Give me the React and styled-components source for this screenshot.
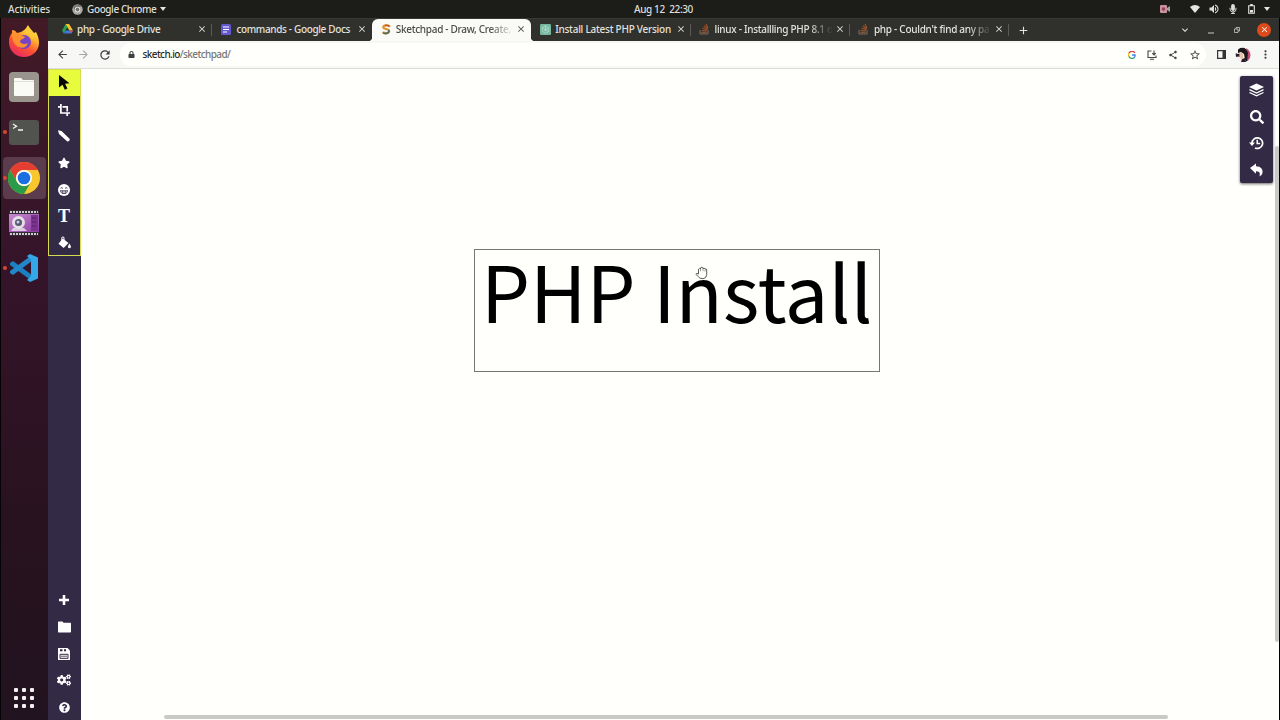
import React from "react";
import styled, { createGlobalStyle } from "styled-components";
import {
  FaStar, FaCogs, FaQuestionCircle, FaSearch, FaLock, FaMicrophone,
} from "react-icons/fa";
import {
  MdArrowBack, MdArrowForward, MdRefresh, MdShare, MdStarBorder,
  MdMoreVert, MdClose, MdAdd, MdVolumeUp, MdExpandMore,
} from "react-icons/md";

const GlobalStyle = createGlobalStyle`
* {
  box-sizing: border-box;
}

body {
  margin: 0;
  overflow: hidden;
  background: #000;
  font-family: "Noto Sans", "Open Sans", sans-serif;
}

svg {
  display: block;
  flex: none;
}
`;

const Desktop = styled.div`
  display: flex;
  flex-direction: column;
  width: 1280px;
  height: 720px;
`;

/* 상단 패널 */
const TopPanel = styled.header`
  display: grid;
  grid-template-columns: 634px 60px 1fr;
  align-items: center;
  height: 18px;
  background: #1c1c18;
  color: #dededa;
`;

const PanelLeft = styled.div`
  display: flex;
  align-items: center;
  padding-left: 8px;
`;

const PanelRight = styled.div`
  display: flex;
  align-items: center;
  justify-content: flex-end;
  padding-right: 10px;
`;

const Label = styled.span`
  font-size: 10px;
  font-weight: 500;
  line-height: 14px;
  letter-spacing: ${p => p.$track || 0}px;
  white-space: pre;
`;

const AppMenu = styled.div`
  display: flex;
  align-items: center;
  gap: 4px;
  margin-left: 22px;
`;

const Gap = styled.span`
  flex: none;
  width: ${p => p.$w}px;
`;

const Body = styled.div`
  display: flex;
  flex: 1;
  min-height: 0;
`;

/* 독 */
const Dock = styled.nav`
  display: flex;
  flex-direction: column;
  align-items: center;
  width: 48px;
  padding-bottom: 12px;
  box-shadow: inset 1px 0 0 #050305;
  background: linear-gradient(#421a26 0, #35142a 35%, #29121f 70%, #21131f 100%);
`;

const DockItem = styled.div`
  display: flex;
  align-items: center;
  justify-content: center;
  position: relative;
  width: 43px;
  height: ${p => p.$h}px;
  margin-top: ${p => (p.$active ? 3 : 0)}px;
  border-radius: 4px;
  background: ${p => (p.$active ? "#5b3c4d" : "transparent")};

  &::before {
    content: "";
    display: ${p => (p.$running ? "block" : "none")};
    position: absolute;
    left: 0;
    width: 4px;
    height: 4px;
    border-radius: 50%;
    background: #d34a30;
  }
`;

const AppsButton = styled.div`
  display: grid;
  grid-template-columns: repeat(3, 4px);
  gap: 4px;
  margin-top: auto;

  > i {
    height: 4px;
    border-radius: 1px;
    background: #f2f0f1;
  }
`;

/* 브라우저 */
const Browser = styled.div`
  display: flex;
  flex-direction: column;
  flex: 1;
  min-width: 0;
  margin-right: 1px;
`;

const TabStrip = styled.div`
  display: flex;
  align-items: center;
  height: 23px;
  padding-left: 5px;
  background: #30302c;
  border-top: 1px solid #383834;
  color: #e2e2de;
`;

const Tab = styled.div`
  display: flex;
  align-items: center;
  position: relative;
  width: 159.400px;
  height: 22px;
  padding: 0 5px 2px 8px;
  border-radius: 6px 6px 0 0;
  background: ${p => (p.$active ? "#fafaf7" : "transparent")};
  color: ${p => (p.$active ? "#4b4b48" : "#e2e2de")};

  &::before {
    content: "";
    display: ${p => (p.$active ? "block" : "none")};
    position: absolute;
    left: -4px;
    right: -4px;
    bottom: 0;
    height: 4px;
    background:
      radial-gradient(circle at 0 0, transparent 4px, #fafaf7 4.500px) left / 4px 4px no-repeat,
      radial-gradient(circle at 100% 0, transparent 4px, #fafaf7 4.500px) right / 4px 4px no-repeat;
  }

  &::after {
    content: "";
    position: absolute;
    right: 0;
    top: 5px;
    width: 1px;
    height: 12px;
    background: ${p => (p.$line ? "#5b5b57" : "transparent")};
  }
`;

const Favicon = styled.span`
  display: flex;
  justify-content: center;
  width: 12px;
`;

const TabTitle = styled.div`
  flex: 1;
  min-width: 0;
  margin-left: 4px;
  font-size: 10px;
  font-weight: 500;
  line-height: 14px;
  letter-spacing: ${p => p.$track || 0}px;
  white-space: nowrap;
  mask-image: ${p => (p.$fade ? "linear-gradient(90deg, #000 78%, transparent 98%)" : "none")};
`;

const WindowButtons = styled.div`
  display: flex;
  align-items: center;
  margin-left: auto;
  padding-right: 8px;
  padding-bottom: 1px;
`;

const CloseWindow = styled.span`
  display: flex;
  align-items: center;
  justify-content: center;
  width: 14px;
  height: 14px;
  border-radius: 50%;
  background: #dd4a1c;
  color: #fff;
`;

const AddressBar = styled.div`
  display: flex;
  align-items: center;
  height: 28px;
  padding: 0 7px 0 8px;
  background: #f7f7f5;
  border-bottom: 1px solid #dcdcda;
  color: #40403e;
`;

const Omnibox = styled.div`
  display: flex;
  align-items: center;
  width: 1088px;
  height: 23px;
  margin-left: 8px;
  padding: 0 5px 0 8px;
  border-radius: 12px;
  background: #fffffc;

  > svg + svg {
    margin-left: 11px;
  }
`;

const Url = styled.span`
  flex: 1;
  margin-left: 7.500px;
  font-size: 10px;
  font-weight: 500;
  line-height: 14px;
  letter-spacing: -0.600px;
  padding-bottom: 1px;
  color: #777775;

  > b {
    font-weight: 500;
    color: #292927;
  }
`;

/* 스케치패드 */
const Page = styled.main`
  display: flex;
  flex: 1;
  min-height: 0;
  background: #fffffc;
`;

const Side = styled.aside`
  display: flex;
  flex-direction: column;
  justify-content: space-between;
  width: 33px;
  background: #332b46;
  color: #fff;
`;

const ToolGroup = styled.div`
  display: flex;
  flex-direction: column;
  outline: ${p => (p.$outlined ? "1px solid #d6dc50" : "0")};
  outline-offset: -1px;
`;

const Tool = styled.div`
  display: flex;
  align-items: center;
  justify-content: center;
  height: 26.700px;
  padding: 1px ${p => (p.$wide ? 0 : 1)}px 0 0;
  background: ${p => (p.$active ? "#e7fc3c" : "transparent")};
  color: ${p => (p.$active ? "#111" : "#fff")};
  font: bold 18px/20px "Liberation Serif", serif;
`;

const Canvas = styled.section`
  position: relative;
  flex: 1;
`;

const TextBox = styled.div`
  position: absolute;
  left: 393px;
  top: 180px;
  width: 406px;
  height: 123px;
  padding-left: 6px;
  border: 1px solid #767674;
  color: #000;
  font-family: "Noto Sans CJK SC", "Noto Sans CJK JP", sans-serif;
  font-size: 77.500px;
  line-height: 79px;
  white-space: nowrap;
`;

const Cursor = styled.div`
  position: absolute;
  left: 614px;
  top: 197px;
`;

const FloatPanel = styled.div`
  position: absolute;
  right: 6px;
  top: 7px;
  width: 33px;
  height: 107px;
  border-radius: 2px;
  background: #332b46;
  color: #fff;
  box-shadow: 0 1px 3px rgba(0, 0, 0, 0.6);
`;

const ScrollV = styled.div`
  position: absolute;
  right: 0;
  top: 77px;
  width: 4px;
  height: 496px;
  border-radius: 2px;
  background: #c9c9c7;
`;

const ScrollH = styled.div`
  position: absolute;
  left: 83px;
  bottom: 1px;
  width: 1004px;
  height: 4px;
  border-radius: 2px;
  background: #c9c9c7;
`;

const FirefoxIcon = () => (
  <svg width="32" height="34" viewBox="0 0 32 34">
    <defs>
      <linearGradient id="ffx" x1="0.8" y1="0" x2="0.25" y2="1">
        <stop offset="0" stopColor="#fff24a" />
        <stop offset="0.35" stopColor="#ffb02e" />
        <stop offset="0.65" stopColor="#ff5035" />
        <stop offset="1" stopColor="#e32766" />
      </linearGradient>
    </defs>
    <path d="M20 1c1 3 4 5 6 8l2-1c2 4 3 7 3 11 0 8-7 14-15 14S1 27 1 18c0-4 1-7 3-9V6c2 0 4 1 5 3l4-1c2-1 5-3 7-7z" fill="url(#ffx)" />
    <circle cx="16" cy="18" r="7" fill="#7644c4" />
    <path d="M4 9c3 0 6 0 9 2l4 2c-1 2-4 2-5 4 0 3 5 4 8 2-1 4-5 6-9 4-4-1-7-6-7-14z" fill="#ff9030" />
    <path d="M16 10c4-2 8 2 8 6 3-3 1-8-2-11l-3-2c0 3-1 5-3 7z" fill="#ffc938" />
  </svg>
);

const FilesIcon = () => (
  <svg width="30" height="30" viewBox="0 0 30 30">
    <rect width="30" height="30" rx="4" fill="#99958c" />
    <path d="M5 7q0-1 1-1h6l2 2h10q1 0 1 1v14q0 1-1 1H6q-1 0-1-1z" fill="#fbfbf6" />
    <path d="M5 9.5h20" stroke="#dbd9d2" strokeWidth="0.8" />
  </svg>
);

const TerminalIcon = () => (
  <svg width="30" height="25" viewBox="0 0 30 25">
    <rect width="30" height="25" rx="3" fill="#51534f" />
    <path d="M4 4l3.500 2.200L4 8.500M9 10h5" fill="none" stroke="#f4f4f2" strokeWidth="1.300" />
  </svg>
);

const ChromeIcon = () => (
  <svg width="32" height="32" viewBox="0 0 32 32">
    <circle cx="16" cy="16" r="16" fill="#f7c72d" />
    <path d="M2.100 8A16 16 0 0 1 29.900 8H16a8 8 0 0 0-7 12z" fill="#e43e32" />
    <path d="M2.100 8A16 16 0 0 0 16 32l7-12a8 8 0 0 1-14 0z" fill="#299b49" />
    <circle cx="16" cy="16" r="8" fill="#fff" />
    <circle cx="16" cy="16" r="6.300" fill="#1b6fe0" />
  </svg>
);

const RecorderIcon = () => (
  <svg width="30" height="26" viewBox="0 0 30 26">
    <defs>
      <linearGradient id="rec" x1="0" y1="0" x2="1" y2="1">
        <stop offset="0" stopColor="#c98bd0" />
        <stop offset="1" stopColor="#8b3aa2" />
      </linearGradient>
    </defs>
    <rect width="30" height="26" rx="1" fill="#332a35" />
    <rect y="4" width="30" height="18" fill="url(#rec)" />
    <rect x="22" y="5" width="7" height="16" fill="#7b348e" />
    <path d="M1 2h28M1 24h28" stroke="#d6cdd8" strokeWidth="2" strokeDasharray="2 1" />
    <path d="M23 8h5M23 12h5M23 16h5" stroke="#4f1b5d" strokeDasharray="1.500 1" />
    <path d="M4 18h11l3 3H2z" fill="#d9cedd" />
    <circle cx="9.500" cy="12.500" r="6.500" fill="#e4dfe8" />
    <circle cx="9.500" cy="12.500" r="3.500" fill="#5a596d" />
    <circle cx="9" cy="12" r="1.500" fill="#c1d2ed" />
  </svg>
);

const CodeIcon = () => (
  <svg width="30" height="28" viewBox="0 0 30 28">
    <path d="M1 9l3-2 19 14v6L1 11z" fill="#1b80bf" />
    <path d="M1 19l3 2L23 7V1L1 17z" fill="#2386c8" />
    <path d="M21 0l8 3.500v21L21 28l-3-2 4-4V6l-4-4z" fill="#35a6e8" />
  </svg>
);

const DriveIcon = () => (
  <svg width="11" height="10" viewBox="0 0 11 10">
    <path d="M3.700 0h3.400L3.400 6.600 1.800 9.500 0 6.500z" fill="#26a252" />
    <path d="M3.700 0h3.400L11 6.500H7.400z" fill="#f5c02d" />
    <path d="M3.500 6.500H11L9.300 9.500H1.800z" fill="#3c78df" />
    <path d="M7.400 6.500H11L9.300 9.500z" fill="#d95143" />
  </svg>
);

const DocsIcon = () => (
  <svg width="10" height="11" viewBox="0 0 10 11">
    <rect width="10" height="11" rx="1.500" fill="#6559cf" />
    <path d="M2 3h6M2 5.500h6M2 8h4" stroke="#fff" strokeWidth="1.200" />
  </svg>
);

const SketchpadIcon = () => (
  <svg width="10" height="11" viewBox="0 0 10 11">
    <path d="M8.500 3C8 .9 2.500.8 2.300 3.200c0 2.200 5.800 1.400 5.800 4 0 2.200-5 2.600-6.300.6" fill="none" stroke="#dd9430" strokeWidth="2.200" />
    <path d="M7.500 6c1.500 2.500-2 4.500-5.500 3" fill="none" stroke="#526b62" strokeWidth="1.700" />
    <path d="M4 1.400c2-.5 3.700 0 4.400 1.300" fill="none" stroke="#c2522f" strokeWidth="1.300" />
  </svg>
);

const GptIcon = () => (
  <svg width="11" height="11" viewBox="0 0 11 11">
    <rect width="11" height="11" rx="1.200" fill="#75b99f" />
    <path d="M5.500 1.800l3.200 1.900v3.700L5.500 9.300 2.300 7.400V3.700zM2.300 3.700l6.400 3.700M5.500 1.800v5.500M8.700 3.700L4 6.500" fill="none" stroke="#c6e4d8" strokeWidth="0.600" />
  </svg>
);

const StackIcon = () => (
  <svg width="11" height="12" viewBox="0 0 11 12">
    <path d="M1 7v4h8V7" fill="none" stroke="#77716a" strokeWidth="1" />
    <path d="M2.500 9.300h5M2.700 7.300l5 .7M3.500 5l4.500 2M5 2.800l3.600 3.400M7 1l2 4.500" stroke="#9c5028" strokeWidth="1.200" />
  </svg>
);

const GoogleG = () => (
  <svg width="8" height="8" viewBox="0 0 18 18">
    <path d="M15.500 4A8 8 0 0 0 2 5" fill="none" stroke="#e34133" strokeWidth="3" />
    <path d="M2.300 5a8 8 0 0 0 0 8" fill="none" stroke="#efb91f" strokeWidth="3" />
    <path d="M2 12.500a8 8 0 0 0 12 2.500" fill="none" stroke="#35a354" strokeWidth="3" />
    <path d="M9 9h7a7 7 0 0 1-2.500 6" fill="none" stroke="#4285e8" strokeWidth="3" />
  </svg>
);

const InstallIcon = () => (
  <svg width="10" height="10" viewBox="0 0 10 10" fill="none" stroke="#454543" strokeWidth="1.100">
    <path d="M4.500 1H1v6.500h8V5.500M3 9.300h4M7 .5v4.300M5.300 3.200L7 5l1.700-1.800" />
  </svg>
);

const Avatar = () => (
  <svg width="16" height="16" viewBox="0 0 16 16">
    <defs>
      <clipPath id="face"><circle cx="8" cy="8" r="7.500" /></clipPath>
    </defs>
    <g clipPath="url(#face)">
      <rect width="16" height="16" fill="#f6efec" />
      <path d="M11 0h5v14h-4z" fill="#c24c71" />
      <path d="M3 2c4-3 9-1 10 4l-1 9-2-2-1-6-3-2-3 1z" fill="#1c171b" />
      <path d="M5 5l3 2v4l-2.500 1z" fill="#e9bb9f" />
      <path d="M0 6l3 1 1.500-.5V10L3 9.500 1 10zM7 12l3-1 1 4H6z" fill="#28202a" />
    </g>
  </svg>
);

const PointerIcon = () => (
  <svg width="12" height="15" viewBox="0 0 12 15">
    <path d="M1 0l10.500 8.200-4.400.5 2.300 4.800-2.600 1.200-2.300-5L1 12.500z" fill="#080808" />
  </svg>
);

const CropIcon = () => (
  <svg width="12" height="12" viewBox="0 0 12 12" fill="none" stroke="#fff" strokeWidth="1.700">
    <path d="M2.900 0v9H12M0 2.900h2.500M4.500 2.900h4.700v4.600M9.200 9.500V12" />
  </svg>
);

const BrushIcon = () => (
  <svg width="12" height="12" viewBox="0 0 12 12">
    <path d="M0 .3l3.500.6 8 7.900q.8 2.700-2.200 2.600L1 3.900z" fill="#fff" />
  </svg>
);

const SmileyIcon = () => (
  <svg width="12" height="12" viewBox="0 0 12 12">
    <circle cx="6" cy="6" r="6" fill="#fff" />
    <path d="M2.500 4.300q1.200-1.200 2.400 0M7 4.300q1.200-1.200 2.400 0" fill="none" stroke="#332b46" strokeWidth="0.900" />
    <path d="M1.800 6.300h8.400Q9.500 10 6 10T1.800 6.300z" fill="#332b46" />
    <path d="M2.700 7.200h6.600M3.500 8.600h5" stroke="#fff" strokeWidth="0.800" />
    <path d="M4.500 6.500v3M7.500 6.500v3" stroke="#332b46" strokeWidth="0.500" />
  </svg>
);

const BucketIcon = () => (
  <svg width="13" height="13" viewBox="0 0 13 13">
    <path d="M4.700 2.500L10.500 7l-4.800 5-5.200-4.300z" fill="#fff" />
    <path d="M3.800 5V1.500Q5 .3 6 1.500V5" fill="none" stroke="#fff" strokeWidth="1" />
    <path d="M11.400 7.500q3 4.600 0 4.700t0-4.700z" fill="#fff" />
  </svg>
);

const PlusIcon = () => (
  <svg width="10" height="10" viewBox="0 0 10 10">
    <path d="M5 0v10M0 5h10" stroke="#fff" strokeWidth="2.600" />
  </svg>
);

const FolderIcon = () => (
  <svg width="13" height="12" viewBox="0 0 13 12">
    <path d="M0 1.200Q0 .5.700.5h3.800l1 1.200h6.800q.7 0 .7.700v8.400q0 .7-.7.700H.7q-.7 0-.7-.7z" fill="#fff" />
  </svg>
);

const FloppyIcon = () => (
  <svg width="12" height="12" viewBox="0 0 12 12">
    <path d="M0 0h9.500L12 2.500V12H0z" fill="#fff" />
    <path d="M2 1.300h2.500v2H2zM6 1.300h2v2H6z" fill="#332b46" />
    <path d="M2 6.300h8v4H2z" fill="#fff" stroke="#332b46" strokeWidth="1" />
    <path d="M3 8.300h6" stroke="#8f8998" strokeWidth="1.500" />
  </svg>
);

const LayersIcon = () => (
  <svg width="15" height="14" viewBox="0 0 15 14">
    <path d="M7.500.5L15 4 7.500 7.500 0 4z" fill="#fff" />
    <path d="M.5 6.700l7 3.300 7-3.300M.5 9.500l7 3.300 7-3.300" fill="none" stroke="#fff" strokeWidth="1.300" />
  </svg>
);

const HistoryIcon = () => (
  <svg width="15" height="14" viewBox="0 0 15 14">
    <path d="M3 7a5.300 5.300 0 1 1 3 4.900" fill="none" stroke="#fff" strokeWidth="1.700" />
    <path d="M0 6.500h6L3 10z" fill="#fff" />
    <path d="M8.200 3.800v3.700h3" fill="none" stroke="#fff" strokeWidth="1.500" />
  </svg>
);

const UndoIcon = () => (
  <svg width="13" height="14" viewBox="0 0 13 14">
    <path d="M0 5L6 .5v2.700c5 0 7 3 6.500 6.500-.3 1.700-1.500 3-3.300 3.800 1.300-2.500.8-5.500-3.200-5.300v2.600z" fill="#fff" />
  </svg>
);

const HandIcon = () => (
  <svg width="13" height="14" viewBox="0 0 13 14">
    <path d="M3.500 7V3.200q1-1.500 1.900-.2Q5.500 1 7 1.200q1 0 1 1.500 1.300-1.300 2 .3 1.600-.6 1.700 1v4.500Q11.500 12.500 8 12.700q-3.500.2-4.700-2.200L.8 8.300Q1.500 6.500 3.500 8z" fill="#fffffc" stroke="#4a4a48" strokeWidth="0.900" />
    <path d="M5.500 3v2.300M8 2.700v2.500M10 3.500v2" stroke="#777" strokeWidth="0.700" />
  </svg>
);

const CaretIcon = () => (
  <svg width="6" height="4" viewBox="0 0 6 4">
    <path d="M0 0h6L3 4z" fill="#e5e5e2" />
  </svg>
);

const tabs = [
  { title: "php - Google Drive", icon: DriveIcon, line: true, track: -0.32 },
  { title: "commands - Google Docs", icon: DocsIcon, track: -0.35 },
  { title: "Sketchpad - Draw, Create,", icon: SketchpadIcon, active: true, fade: true, track: -0.3 },
  { title: "Install Latest PHP Version", icon: GptIcon, line: true, track: -0.25 },
  { title: "linux - Installling PHP 8.1 o", icon: StackIcon, line: true, fade: true, track: -0.3 },
  { title: "php - Couldn't find any pa", icon: StackIcon, line: true, fade: true, track: -0.28 },
];

const App = () => {
  return (
    <>
      <GlobalStyle />
      <Desktop>
        <TopPanel>
          <PanelLeft>
            <Label $track={-0.1}>Activities</Label>
            <AppMenu>
              <svg width="11" height="11" viewBox="0 0 11 11">
                <circle cx="5.500" cy="5.500" r="5.200" fill="#aaa9a7" />
                <path d="M1 3Q6-2 10 3H5.500L3 7z" fill="#777674" />
                <circle cx="5.500" cy="5.500" r="2.700" fill="#eee" />
                <circle cx="5.500" cy="5.500" r="1.900" fill="#747371" />
              </svg>
              <Label $track={-0.42}>Google Chrome</Label>
              <CaretIcon />
            </AppMenu>
          </PanelLeft>
          <Label $track={-0.38}>Aug 12  22:30</Label>
          <PanelRight>
            <svg width="10" height="8" viewBox="0 0 10 8">
              <rect width="7" height="8" rx="1" fill="#c9929f" />
              <path d="M7 3l3-2v6L7 5z" fill="#a99ca0" />
              <circle cx="3.500" cy="4" r="1.800" fill="#934257" />
            </svg>
            <Gap $w={20} />
            <svg width="10" height="8" viewBox="0 0 10 8"><path d="M0 2Q5-2 10 2L5 8z" fill="#e5e5e2" /></svg>
            <Gap $w={8} />
            <MdVolumeUp size={12} />
            <Gap $w={8} />
            <FaMicrophone size={10} />
            <Gap $w={10} />
            <svg width="7" height="10" viewBox="0 0 7 10">
              <path d="M.7 1.700h5.600v7.600H.7zM2.200.6h2.600" fill="none" stroke="#e5e5e2" strokeWidth="1.100" />
              <path d="M2 6h3v2.500H2z" fill="#e5e5e2" />
            </svg>
            <Gap $w={9} />
            <CaretIcon />
          </PanelRight>
        </TopPanel>

        <Body>
          <Dock>
            <DockItem $h={46}><FirefoxIcon /></DockItem>
            <DockItem $h={46}><FilesIcon /></DockItem>
            <DockItem $h={44} $running><TerminalIcon /></DockItem>
            <DockItem $h={42} $active $running><ChromeIcon /></DockItem>
            <DockItem $h={47}><RecorderIcon /></DockItem>
            <DockItem $h={44} $running><CodeIcon /></DockItem>
            <AppsButton>
              {Array.from({ length: 9 }, (_, i) => <i key={i} />)}
            </AppsButton>
          </Dock>

          <Browser>
            <TabStrip>
              {tabs.map(({ title, icon: Icon, active, line, fade, track }) => (
                <Tab key={title} $active={active} $line={line}>
                  <Favicon><Icon /></Favicon>
                  <TabTitle $fade={fade} $track={track}>{title}</TabTitle>
                  <MdClose size={10} />
                </Tab>
              ))}
              <Gap $w={8} />
              <MdAdd size={13} />
              <WindowButtons>
                <MdExpandMore size={12} />
                <Gap $w={17} />
                <svg width="6" height="8" viewBox="0 0 6 8"><path d="M0 7h6" stroke="#c9c9c5" /></svg>
                <Gap $w={20} />
                <svg width="6" height="6" viewBox="0 0 6 6"><path d="M.5 2h3.500v3.500H.5zM2 2V.5h3.500V4H4" fill="none" stroke="#c9c9c5" strokeWidth="0.800" /></svg>
                <Gap $w={17} />
                <CloseWindow><MdClose size={9} /></CloseWindow>
              </WindowButtons>
            </TabStrip>

            <AddressBar>
              <MdArrowBack size={13} />
              <Gap $w={8} />
              <MdArrowForward size={13} color="#a5a5a3" />
              <Gap $w={8} />
              <MdRefresh size={14} />
              <Omnibox>
                <FaLock size={7} />
                <Url><b>sketch.io</b>/sketchpad/</Url>
                <GoogleG />
                <InstallIcon />
                <MdShare size={10} />
                <MdStarBorder size={12} />
              </Omnibox>
              <Gap $w={11} />
              <svg width="9" height="9" viewBox="0 0 9 9">
                <path d="M.6.600h7.800v7.800H.6z" fill="none" stroke="#343432" strokeWidth="1.200" />
                <path d="M5.500 0H9v9H5.500z" fill="#343432" />
              </svg>
              <Gap $w={9} />
              <Avatar />
              <Gap $w={8} />
              <MdMoreVert size={13} />
            </AddressBar>

            <Page>
              <Side>
                <ToolGroup $outlined>
                  <Tool $active><PointerIcon /></Tool>
                  <Tool><CropIcon /></Tool>
                  <Tool><BrushIcon /></Tool>
                  <Tool><FaStar size={12} /></Tool>
                  <Tool><SmileyIcon /></Tool>
                  <Tool>T</Tool>
                  <Tool><BucketIcon /></Tool>
                </ToolGroup>
                <ToolGroup>
                  <Tool><PlusIcon /></Tool>
                  <Tool><FolderIcon /></Tool>
                  <Tool><FloppyIcon /></Tool>
                  <Tool><FaCogs size={14} /></Tool>
                  <Tool><FaQuestionCircle size={11} /></Tool>
                </ToolGroup>
              </Side>

              <Canvas>
                <TextBox>PHP Install</TextBox>
                <Cursor><HandIcon /></Cursor>
                <ScrollV />
                <ScrollH />
                <FloatPanel>
                  <Tool $wide><LayersIcon /></Tool>
                  <Tool $wide><FaSearch size={14} /></Tool>
                  <Tool $wide><HistoryIcon /></Tool>
                  <Tool $wide><UndoIcon /></Tool>
                </FloatPanel>
              </Canvas>
            </Page>
          </Browser>
        </Body>
      </Desktop>
    </>
  );
};

export default App;
